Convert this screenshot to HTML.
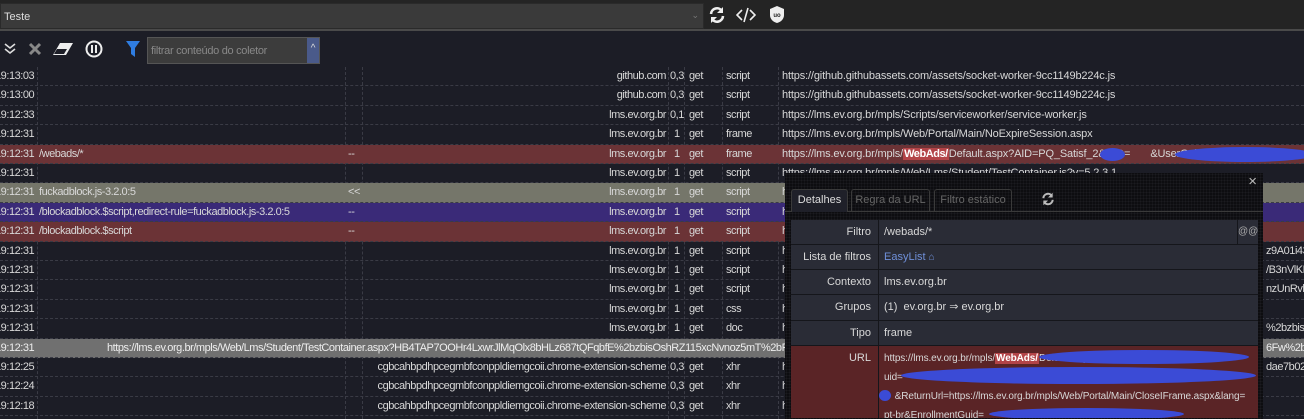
<!DOCTYPE html>
<html><head><meta charset="utf-8"><style>
*{box-sizing:border-box;margin:0;padding:0}
body{width:1304px;height:419px;overflow:hidden;background:#1c1d26;font-family:"Liberation Sans",sans-serif;color:#d8d8d8;position:relative}
.top{position:absolute;left:0;top:0;width:1304px;height:31px;background:#242424;border-bottom:2px solid #4a4a4a}
.sel{position:absolute;left:0;top:3px;width:704px;height:26px;background:#3a3a3a;border:1px solid #2a2a2a;font-size:11px;color:#ddd;padding:7px 3px}
.tb{position:absolute;left:0;top:33px;width:1304px;height:34px;background:#1c1d26}
.inp{position:absolute;left:147px;top:37px;width:173px;height:27px;background:#3c3c3c;border:1px solid #555;font-size:11px;color:#888;padding:7px 3px;letter-spacing:-.3px}
.inp b{position:absolute;right:0;top:0;width:12px;height:25px;background:#4a5a8a;color:#ddd;font-weight:normal;font-size:10px;text-align:center;line-height:22px}
.row{position:absolute;left:0;width:1304px;height:19.4px;border-bottom:1px dashed #3a3b45;font-size:11px;line-height:18px;white-space:nowrap;overflow:hidden}
.row span{position:absolute;top:0;letter-spacing:-.45px}
.c0{left:-5px}.c1{left:39px}.c2{left:348px}.c3{right:638px;text-align:right}.c4{left:674px}.c5{left:689px}.c6{left:726px}
.row .c7{left:782px;letter-spacing:-.15px}
.vl{position:absolute;top:67px;height:352px;border-left:1px dashed #3a3b45}
.wa{background:#b34448;color:#fff;font-weight:bold;padding:0 1px}
.blob{position:absolute;background:#3b4bd6;border-radius:50%}
.pop{position:absolute;left:785px;top:173px;width:478px;height:246px;background:#0d0d10;background-image:radial-gradient(#1b1b1f 1px,transparent 1px);background-size:3px 3px}
.tab{position:absolute;top:16px;height:22px;border:1px solid #3a3a3a;border-bottom:none;border-radius:3px 3px 0 0;font-size:11px;color:#666;text-align:center;line-height:21px}
.tab.on{background:#1f2029;color:#ddd}
.tbl{position:absolute;left:6px;top:47px;width:467px;background:#1b1c22}
.tr{display:flex;border-bottom:1px solid #15161b;font-size:11px}
.tr .l{flex:none;width:88px;text-align:right;padding-right:7px;background:#2a2c36;border-right:1px solid #15161b}
.tr .v{flex:1;background:#2a2c36;padding-left:5px;min-width:0}
</style></head><body>
<div class="top"><div class="sel">Teste<span style="position:absolute;right:4px;top:6px;color:#777;font-size:9px">⌄</span></div>
<svg style="position:absolute;left:708px;top:6px" width="18" height="18" viewBox="0 0 18 18"><path d="M3 8a6 6 0 0 1 11-3M15 10a6 6 0 0 1-11 3" stroke="#eee" stroke-width="2.6" fill="none"/><path d="M15 1v6h-6zM3 17v-6h6z" fill="#eee"/></svg>
<svg style="position:absolute;left:736px;top:7px" width="20" height="16" viewBox="0 0 20 16"><path d="M6 3L1 8l5 5M14 3l5 5-5 5M12 1L8 15" stroke="#eee" stroke-width="1.6" fill="none"/></svg>
<svg style="position:absolute;left:769px;top:5px" width="16" height="19" viewBox="0 0 16 19"><path d="M8 1l7 3v6c0 4-3 7-7 8-4-1-7-4-7-8V4z" fill="#eee"/><text x="8" y="12" font-size="6" text-anchor="middle" fill="#222" font-family="Liberation Sans" font-weight="bold">uo</text></svg>
</div>
<div class="tb">
<svg style="position:absolute;left:3px;top:9px" width="14" height="14" viewBox="0 0 14 14"><path d="M2 2l5 4 5-4M2 7l5 4 5-4" stroke="#ddd" stroke-width="1.6" fill="none"/></svg>
<svg style="position:absolute;left:28px;top:9px" width="14" height="14" viewBox="0 0 14 14"><path d="M2 2l10 10M12 2L2 12" stroke="#888" stroke-width="3"/></svg>
<svg style="position:absolute;left:52px;top:9px" width="22" height="14" viewBox="0 0 22 14"><path d="M8 1h13l-7 12H1z" fill="#eee"/><path d="M5 7h10l-3 5H2z" fill="#1c1d26"/></svg>
<svg style="position:absolute;left:85px;top:7px" width="18" height="18" viewBox="0 0 18 18"><circle cx="9" cy="9" r="7.5" stroke="#eee" stroke-width="2" fill="none"/><path d="M7 5v8M11 5v8" stroke="#eee" stroke-width="2"/></svg>
<svg style="position:absolute;left:126px;top:8px" width="14" height="16" viewBox="0 0 14 16"><path d="M0 0h14L9 7v9L5 13V7z" fill="#2f7de1"/></svg>
</div>
<div class="inp">filtrar conteúdo do coletor<b>^</b></div>

<div class="vl" style="left:37px"></div><div class="vl" style="left:345px"></div><div class="vl" style="left:362px"></div><div class="vl" style="left:668px"></div><div class="vl" style="left:684px"></div><div class="vl" style="left:722px"></div><div class="vl" style="left:778px"></div>

<div class="row" style="top:67px"><span class="c0">19:13:03</span><span class="c3">github.com</span><span class="c4" style="left:670px">0,3</span><span class="c5">get</span><span class="c6">script</span><span class="c7">https://github.githubassets.com/assets/socket-worker-9cc1149b224c.js</span></div>
<div class="row" style="top:86.4px"><span class="c0">19:13:00</span><span class="c3">github.com</span><span class="c4" style="left:670px">0,3</span><span class="c5">get</span><span class="c6">script</span><span class="c7">https://github.githubassets.com/assets/socket-worker-9cc1149b224c.js</span></div>
<div class="row" style="top:105.8px"><span class="c0">19:12:33</span><span class="c3">lms.ev.org.br</span><span class="c4" style="left:670px">0,1</span><span class="c5">get</span><span class="c6">script</span><span class="c7">https://lms.ev.org.br/mpls/Scripts/serviceworker/service-worker.js</span></div>
<div class="row" style="top:125.2px"><span class="c0">19:12:31</span><span class="c3">lms.ev.org.br</span><span class="c4">1</span><span class="c5">get</span><span class="c6">frame</span><span class="c7">https://lms.ev.org.br/mpls/Web/Portal/Main/NoExpireSession.aspx</span></div>
<div class="row" style="top:144.6px;background:#6b3336"><span class="c0">19:12:31</span><span class="c1">/webads/*</span><span class="c2">--</span><span class="c3">lms.ev.org.br</span><span class="c4">1</span><span class="c5">get</span><span class="c6">frame</span><span class="c7">https://lms.ev.org.br/mpls/<span class="wa" style="position:static">WebAds/</span>Default.aspx?AID=PQ_Satisf_2&amp;CID=<span style="position:static;display:inline-block;width:20px"></span>&amp;UserGuid=</span><div class="blob" style="left:1100px;top:3px;width:25px;height:13px"></div><div class="blob" style="left:1175px;top:2px;width:140px;height:15px"></div></div>
<div class="row" style="top:164px"><span class="c0">19:12:31</span><span class="c3">lms.ev.org.br</span><span class="c4">1</span><span class="c5">get</span><span class="c6">script</span><span class="c7">https://lms.ev.org.br/mpls/Web/Lms/Student/TestContainer.js?v=5.2.3.1</span></div>
<div class="row" style="top:183.4px;background:#75766a"><span class="c0">19:12:31</span><span class="c1">fuckadblock.js-3.2.0:5</span><span class="c2">&lt;&lt;</span><span class="c3">lms.ev.org.br</span><span class="c4">1</span><span class="c5">get</span><span class="c6">script</span><span class="c7">h</span></div>
<div class="row" style="top:202.8px;background:#3a2a78"><span class="c0">19:12:31</span><span class="c1">/blockadblock.$script,redirect-rule=fuckadblock.js-3.2.0:5</span><span class="c2">--</span><span class="c3">lms.ev.org.br</span><span class="c4">1</span><span class="c5">get</span><span class="c6">script</span><span class="c7">h</span></div>
<div class="row" style="top:222.2px;background:#6b3336"><span class="c0">19:12:31</span><span class="c1">/blockadblock.$script</span><span class="c2">--</span><span class="c3">lms.ev.org.br</span><span class="c4">1</span><span class="c5">get</span><span class="c6">script</span><span class="c7">h</span></div>
<div class="row" style="top:241.6px"><span class="c0">19:12:31</span><span class="c3">lms.ev.org.br</span><span class="c4">1</span><span class="c5">get</span><span class="c6">script</span><span class="c7">h</span><span style="left:1266px">z9A01i43</span></div>
<div class="row" style="top:261px"><span class="c0">19:12:31</span><span class="c3">lms.ev.org.br</span><span class="c4">1</span><span class="c5">get</span><span class="c6">script</span><span class="c7">h</span><span style="left:1266px">/B3nVlKR</span></div>
<div class="row" style="top:280.4px"><span class="c0">19:12:31</span><span class="c3">lms.ev.org.br</span><span class="c4">1</span><span class="c5">get</span><span class="c6">script</span><span class="c7">h</span><span style="left:1266px">nzUnRvh</span></div>
<div class="row" style="top:299.8px"><span class="c0">19:12:31</span><span class="c3">lms.ev.org.br</span><span class="c4">1</span><span class="c5">get</span><span class="c6">css</span><span class="c7">h</span></div>
<div class="row" style="top:319.2px"><span class="c0">19:12:31</span><span class="c3">lms.ev.org.br</span><span class="c4">1</span><span class="c5">get</span><span class="c6">doc</span><span class="c7">h</span><span style="left:1266px">%2bzbisC</span></div>
<div class="row" style="top:338.6px;background:#707070;color:#eee"><span class="c0">19:12:31</span><span style="left:107px">https://lms.ev.org.br/mpls/Web/Lms/Student/TestContainer.aspx?HB4TAP7OOHr4LxwrJlMqOlx8bHLz687tQFqbfE%2bzbisOshRZ115xcNvnoz5mT%2bRrC3b2qM</span><span style="left:1266px">6Fw%2b0</span></div>
<div class="row" style="top:358px"><span class="c0">19:12:25</span><span class="c3">cgbcahbpdhpcegmbfconppldiemgcoii.chrome-extension-scheme</span><span class="c4" style="left:670px">0,3</span><span class="c5">get</span><span class="c6">xhr</span><span class="c7">h</span><span style="left:1266px">dae7b020</span></div>
<div class="row" style="top:377.4px"><span class="c0">19:12:24</span><span class="c3">cgbcahbpdhpcegmbfconppldiemgcoii.chrome-extension-scheme</span><span class="c4" style="left:670px">0,3</span><span class="c5">get</span><span class="c6">xhr</span><span class="c7">h</span></div>
<div class="row" style="top:396.8px"><span class="c0">19:12:18</span><span class="c3">cgbcahbpdhpcegmbfconppldiemgcoii.chrome-extension-scheme</span><span class="c4" style="left:670px">0,3</span><span class="c5">get</span><span class="c6">xhr</span><span class="c7">h</span></div>

<div class="pop">
<div style="position:absolute;right:6px;top:0;color:#bbb;font-size:15px">×</div>
<div style="position:absolute;left:0;top:38px;width:478px;border-top:1px solid #3a3a3a"></div>
<div class="tab on" style="left:6px;width:57px;height:23px">Detalhes</div>
<div class="tab" style="left:66px;width:79px">Regra da URL</div>
<div class="tab" style="left:149px;width:78px">Filtro estático</div>
<svg style="position:absolute;left:256px;top:19px" width="14" height="14" viewBox="0 0 18 18"><path d="M3 8a6 6 0 0 1 11-3M15 10a6 6 0 0 1-11 3" stroke="#bbb" stroke-width="2.6" fill="none"/><path d="M15 1v6h-6zM3 17v-6h6z" fill="#bbb"/></svg>
<div class="tbl">
<div class="tr" style="height:25px;line-height:24px"><div class="l">Filtro</div><div class="v" style="position:relative">/webads/*<span style="position:absolute;right:0;top:0;width:21px;height:24px;border-left:1px solid #15161b;color:#aaa;text-align:center;font-size:10px">@@</span></div></div>
<div class="tr" style="height:25px;line-height:24px"><div class="l">Lista de filtros</div><div class="v" style="color:#6f8fd8">EasyList <span style="font-size:10px">⌂</span></div></div>
<div class="tr" style="height:25px;line-height:24px"><div class="l">Contexto</div><div class="v">lms.ev.org.br</div></div>
<div class="tr" style="height:26px;line-height:25px"><div class="l">Grupos</div><div class="v">(1)&nbsp; ev.org.br ⇒ ev.org.br</div></div>
<div class="tr" style="height:25px;line-height:24px"><div class="l">Tipo</div><div class="v">frame</div></div>
<div class="tr" style="height:72px;line-height:19px;border:none"><div class="l" style="background:#5a2426;padding-top:3px">URL</div><div class="v" style="background:#5a2426;padding-top:3px;position:relative;white-space:nowrap;overflow:hidden;font-size:10px;letter-spacing:-.1px">https://lms.ev.org.br/mpls/<span class="wa">WebAds/</span>Default.aspx?AID=<br>uid=<br>&nbsp;&nbsp;&nbsp;&nbsp;&amp;ReturnUrl=https://lms.ev.org.br/mpls/Web/Portal/Main/CloseIFrame.aspx&amp;lang=<br>pt-br&amp;EnrollmentGuid=
<div class="blob" style="left:160px;top:4px;width:210px;height:14px"></div>
<div class="blob" style="left:22px;top:21px;width:355px;height:17px"></div>
<div class="blob" style="left:0;top:44px;width:12px;height:11px"></div>
<div class="blob" style="left:110px;top:62px;width:195px;height:12px"></div>
</div></div>
</div>
</div>
</body></html>
